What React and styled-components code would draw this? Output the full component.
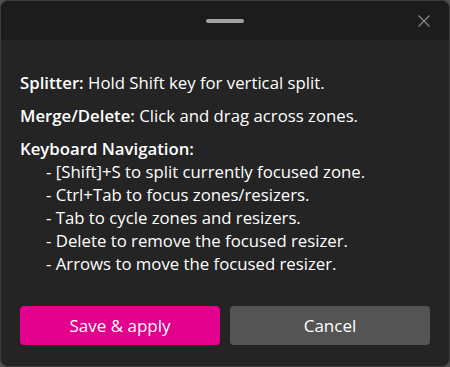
import React from "react";
import styled, { createGlobalStyle } from "styled-components";

const Global = createGlobalStyle`
  html, body { margin: 0; padding: 0; background: #4f4f4f; }
  body { font-family: "Open Sans", "Noto Sans", sans-serif; }
  * { box-sizing: border-box; }
`;

const Window = styled.div`
  width: 450px;
  height: 367px;
  display: flex;
  flex-direction: column;
  background: #242424;
  border: 1px solid #3c3c3c;
  border-radius: 8px;
  overflow: hidden;
  color: #ffffff;
`;

const Header = styled.div`
  position: relative;
  height: 39px;
  flex: none;
  background: #1c1c1c;
  display: flex;
  align-items: center;
  justify-content: center;
`;

const Handle = styled.div`
  width: 38px;
  height: 4px;
  border-radius: 2px;
  background: #a3a3a3;
  margin-top: 1px;
`;

const CloseButton = styled.button`
  position: absolute;
  right: 18px;
  top: 13px;
  width: 14px;
  height: 14px;
  padding: 0;
  border: 0;
  background: transparent;
  display: flex;
  align-items: center;
  justify-content: center;
`;

const Content = styled.div`
  padding: 31px 20px 0 19px;
  font-size: 16.75px;
  line-height: 23px;
`;

const Para = styled.p`
  margin: 0 0 10px 0;
  white-space: nowrap;
`;

const Bold = styled.b`
  font-weight: 600;
`;

const Heading = styled.div`
  font-weight: 600;
  margin-top: 1px;
`;

const List = styled.ul`
  list-style: none;
  margin: 0;
  padding: 0 0 0 26px;
`;

const Item = styled.li`
  white-space: nowrap;
`;

const Footer = styled.div`
  margin-top: auto;
  display: grid;
  grid-template-columns: 1fr 1fr;
  gap: 10px;
  padding: 0 19px 21px 19px;
`;

const Button = styled.button`
  height: 39px;
  border: 0;
  border-radius: 4px;
  font-family: "Open Sans", "Noto Sans", sans-serif;
  font-size: 17px;
  color: #ffffff;
  background: ${(p) => (p.$primary ? "#e3008c" : "#545454")};
`;

const items = [
  "- [Shift]+S to split currently focused zone.",
  "- Ctrl+Tab to focus zones/resizers.",
  "- Tab to cycle zones and resizers.",
  "- Delete to remove the focused resizer.",
  "- Arrows to move the focused resizer.",
];

export default function App() {
  return (
    <>
      <Global />
      <Window>
        <Header>
          <Handle />
          <CloseButton aria-label="Close">
            <svg width="12" height="12" viewBox="0 0 12 12">
              <path d="M0.5 0.5 L11.5 11.5 M11.5 0.5 L0.5 11.5" stroke="#8c8c8c" strokeWidth="1.1" fill="none" />
            </svg>
          </CloseButton>
        </Header>
        <Content>
          <Para>
            <Bold>Splitter:</Bold> Hold Shift key for vertical split.
          </Para>
          <Para>
            <Bold>Merge/Delete:</Bold> Click and drag across zones.
          </Para>
          <Heading>Keyboard Navigation:</Heading>
          <List>
            {items.map((t) => (
              <Item key={t}>{t}</Item>
            ))}
          </List>
        </Content>
        <Footer>
          <Button $primary>Save &amp; apply</Button>
          <Button>Cancel</Button>
        </Footer>
      </Window>
    </>
  );
}
